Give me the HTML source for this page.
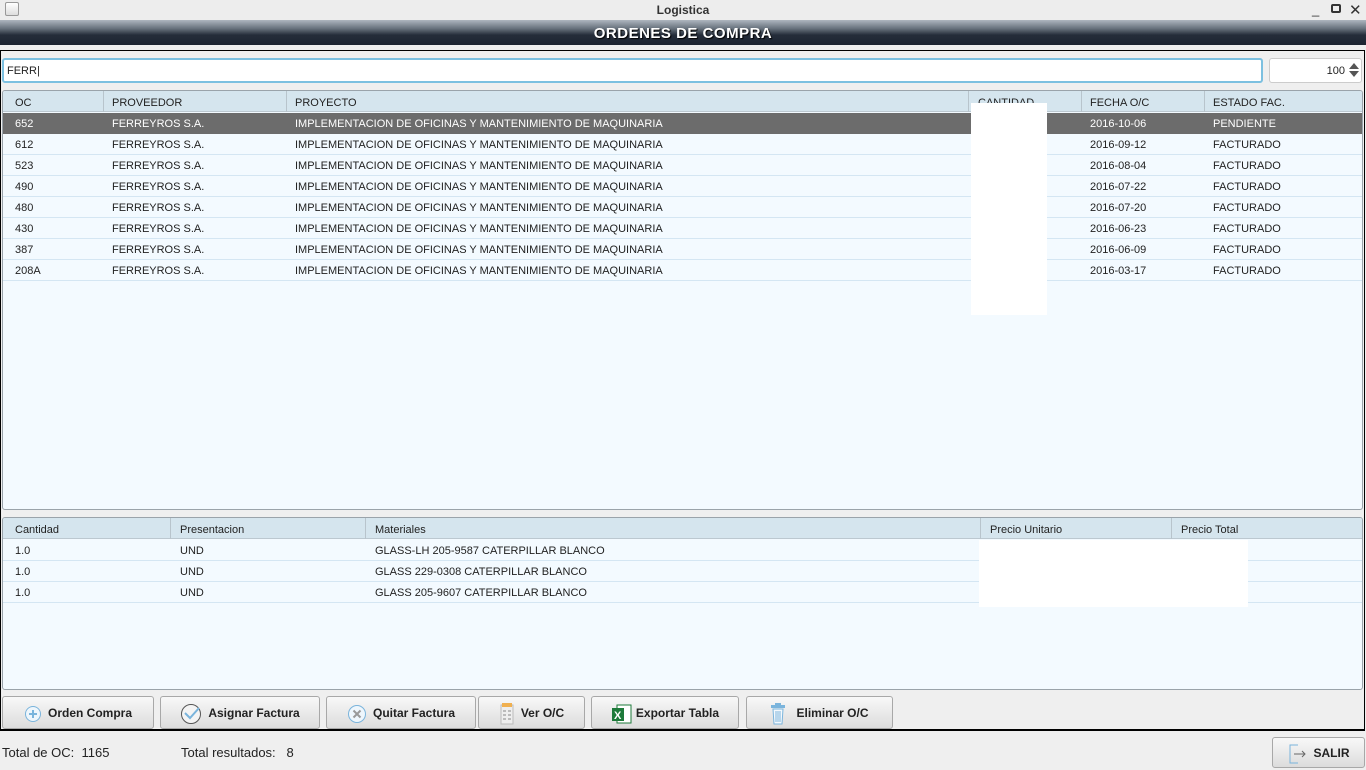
<!DOCTYPE html>
<html><head><meta charset="utf-8"><style>
*{margin:0;padding:0;box-sizing:border-box}
body{width:1366px;height:768px;background:#efefef;font-family:"Liberation Sans",sans-serif;position:relative;overflow:hidden;color:#222}
.a{position:absolute}
.title{left:0;top:0;width:1366px;height:20px;background:#ededed;text-align:center;font-size:12px;font-weight:bold;color:#333;line-height:21px}
.banner{left:0;top:20px;width:1366px;height:25px;background:linear-gradient(#aeb6bf 0%,#66707b 35%,#252d3a 60%,#1d2431 100%);text-align:center;color:#fff;font-weight:bold;font-size:15px;line-height:28px;letter-spacing:0.5px;text-shadow:1px 1px 1px #000}
.panel{left:0;top:50px;width:1365px;height:681px;border:1px solid #000;border-bottom:2px solid #000;background:#efefef}
.tbl{background:#f3faff;border:1px solid #9aa3aa;border-radius:3px;overflow:hidden}
.hd{position:absolute;left:0;right:0;top:0;height:21px;background:#d5e5ee;border-bottom:1px solid #bcc8d0}
.hd span{position:absolute;top:2px;font-size:11px;line-height:21px;white-space:nowrap}
.row span{position:absolute;top:1px;font-size:11px;line-height:21px;white-space:nowrap}
.hd i{position:absolute;top:0;width:1px;height:21px;background:#b8c4cc}
.row{position:absolute;left:0;right:0;height:21px;border-bottom:1px solid #d4e6f3}
.sel{background:#6c6c6c;color:#fff;border-bottom:none}
.btn{position:absolute;top:696px;height:33px;border:1px solid #a8a8a8;border-radius:3px;background:linear-gradient(#f8f8f8,#dcdcdc);font-weight:bold;font-size:12px;line-height:33px;padding-top:2px;color:#222;display:flex;align-items:center;justify-content:center;gap:6px}
.wb{background:#fff;position:absolute}
</style></head><body>
<div class="a title">Logistica</div>
<div class="a" style="left:5px;top:2px;width:14px;height:14px;border:1px solid #999;border-radius:2px;background:linear-gradient(#fff,#ddd)"></div>
<div class="a" style="left:1312px;top:2px;font-size:13px;color:#333">_</div>
<div class="a" style="left:1331px;top:4px;width:10px;height:9px;border:2px solid #333;border-radius:2px"></div>
<div class="a" style="left:1349px;top:1px;font-size:15px;color:#333">✕</div>
<div class="a banner">ORDENES DE COMPRA</div>
<div class="a panel"></div>
<div class="a" style="left:2px;top:58px;width:1261px;height:25px;border:2px solid #7cc0e0;border-radius:3px;background:#fff;font-size:11px;line-height:23px;padding-left:3px">FERR|</div>
<div class="a" style="left:1269px;top:58px;width:93px;height:25px;border:1px solid #ccc;border-radius:3px;background:#fff;font-size:11px;line-height:24px;text-align:right;padding-right:16px">100</div>
<div class="a" style="left:1349px;top:63px;width:0;height:0;border-left:5px solid transparent;border-right:5px solid transparent;border-bottom:6px solid #555"></div>
<div class="a" style="left:1349px;top:71px;width:0;height:0;border-left:5px solid transparent;border-right:5px solid transparent;border-top:6px solid #555"></div>

<div class="a tbl" style="left:2px;top:90px;width:1361px;height:420px">
 <div class="hd"><span style="left:12px">OC</span><i style="left:100px"></i><span style="left:109px">PROVEEDOR</span><i style="left:283px"></i><span style="left:292px">PROYECTO</span><i style="left:965px"></i><span style="left:975px">CANTIDAD</span><i style="left:1078px"></i><span style="left:1087px">FECHA O/C</span><i style="left:1201px"></i><span style="left:1210px">ESTADO FAC.</span></div>
 <div class="row sel" style="top:22px"><span style="left:12px">652</span><span style="left:109px">FERREYROS S.A.</span><span style="left:292px">IMPLEMENTACION DE OFICINAS Y MANTENIMIENTO DE MAQUINARIA</span><span style="left:1087px">2016-10-06</span><span style="left:1210px">PENDIENTE</span></div>
 <div class="row" style="top:43px"><span style="left:12px">612</span><span style="left:109px">FERREYROS S.A.</span><span style="left:292px">IMPLEMENTACION DE OFICINAS Y MANTENIMIENTO DE MAQUINARIA</span><span style="left:1087px">2016-09-12</span><span style="left:1210px">FACTURADO</span></div>
 <div class="row" style="top:64px"><span style="left:12px">523</span><span style="left:109px">FERREYROS S.A.</span><span style="left:292px">IMPLEMENTACION DE OFICINAS Y MANTENIMIENTO DE MAQUINARIA</span><span style="left:1087px">2016-08-04</span><span style="left:1210px">FACTURADO</span></div>
 <div class="row" style="top:85px"><span style="left:12px">490</span><span style="left:109px">FERREYROS S.A.</span><span style="left:292px">IMPLEMENTACION DE OFICINAS Y MANTENIMIENTO DE MAQUINARIA</span><span style="left:1087px">2016-07-22</span><span style="left:1210px">FACTURADO</span></div>
 <div class="row" style="top:106px"><span style="left:12px">480</span><span style="left:109px">FERREYROS S.A.</span><span style="left:292px">IMPLEMENTACION DE OFICINAS Y MANTENIMIENTO DE MAQUINARIA</span><span style="left:1087px">2016-07-20</span><span style="left:1210px">FACTURADO</span></div>
 <div class="row" style="top:127px"><span style="left:12px">430</span><span style="left:109px">FERREYROS S.A.</span><span style="left:292px">IMPLEMENTACION DE OFICINAS Y MANTENIMIENTO DE MAQUINARIA</span><span style="left:1087px">2016-06-23</span><span style="left:1210px">FACTURADO</span></div>
 <div class="row" style="top:148px"><span style="left:12px">387</span><span style="left:109px">FERREYROS S.A.</span><span style="left:292px">IMPLEMENTACION DE OFICINAS Y MANTENIMIENTO DE MAQUINARIA</span><span style="left:1087px">2016-06-09</span><span style="left:1210px">FACTURADO</span></div>
 <div class="row" style="top:169px"><span style="left:12px">208A</span><span style="left:109px">FERREYROS S.A.</span><span style="left:292px">IMPLEMENTACION DE OFICINAS Y MANTENIMIENTO DE MAQUINARIA</span><span style="left:1087px">2016-03-17</span><span style="left:1210px">FACTURADO</span></div>
 <div class="wb" style="left:968px;top:12px;width:76px;height:212px"></div>
</div>

<div class="a tbl" style="left:2px;top:517px;width:1361px;height:173px">
 <div class="hd"><span style="left:12px">Cantidad</span><i style="left:167px"></i><span style="left:177px">Presentacion</span><i style="left:362px"></i><span style="left:372px">Materiales</span><i style="left:977px"></i><span style="left:987px">Precio Unitario</span><i style="left:1168px"></i><span style="left:1178px">Precio Total</span></div>
 <div class="row" style="top:22px"><span style="left:12px">1.0</span><span style="left:177px">UND</span><span style="left:372px">GLASS-LH 205-9587 CATERPILLAR BLANCO</span></div>
 <div class="row" style="top:43px"><span style="left:12px">1.0</span><span style="left:177px">UND</span><span style="left:372px">GLASS 229-0308 CATERPILLAR BLANCO</span></div>
 <div class="row" style="top:64px"><span style="left:12px">1.0</span><span style="left:177px">UND</span><span style="left:372px">GLASS 205-9607 CATERPILLAR BLANCO</span></div>
 <div class="wb" style="left:976px;top:22px;width:269px;height:67px"></div>
</div>

<div class="btn" style="left:2px;width:152px"><svg width="18" height="18"><circle cx="9" cy="9" r="7.5" fill="#eef6fc" stroke="#7ab4dc"/><path d="M9 5v8M5 9h8" stroke="#7ab4dc" stroke-width="2"/></svg>Orden Compra</div>
<div class="btn" style="left:160px;width:160px"><svg width="22" height="22"><circle cx="11" cy="11" r="9.5" fill="#f4f4f4" stroke="#555"/><path d="M5 10l5 5 9-10" fill="none" stroke="#7ab4dc" stroke-width="2"/></svg>Asignar Factura</div>
<div class="btn" style="left:326px;width:150px"><svg width="20" height="20"><circle cx="10" cy="10" r="8.5" fill="#eef6fc" stroke="#7ab4dc"/><path d="M6.5 6.5l7 7M13.5 6.5l-7 7" stroke="#999" stroke-width="2"/></svg>Quitar Factura</div>
<div class="btn" style="left:478px;width:107px"><svg width="16" height="24"><rect x="2" y="3" width="12" height="19" fill="#eee" stroke="#bbb"/><rect x="3" y="1" width="10" height="4" fill="#f0b050"/><path d="M4 9h3M9 9h3M4 13h3M9 13h3M4 17h3M9 17h3" stroke="#888"/></svg>Ver O/C</div>
<div class="btn" style="left:591px;width:148px;gap:3px"><svg width="22" height="22"><rect x="6" y="2" width="14" height="18" fill="#fff" stroke="#1d7a3a"/><rect x="1" y="5" width="12" height="13" fill="#1d7a3a"/><text x="3" y="16" font-size="11" font-weight="bold" fill="#fff" font-family="Liberation Sans">X</text></svg>Exportar Tabla</div>
<div class="btn" style="left:746px;width:147px;gap:10px"><svg width="16" height="24"><rect x="5" y="1" width="6" height="2" fill="#7ab4dc"/><rect x="1" y="3" width="14" height="3" fill="#7ab4dc"/><path d="M3 7h10l-1 15H4z" fill="#f4f9fd" stroke="#7ab4dc"/><path d="M6 9v11M8 9v11M10 9v11" stroke="#7ab4dc"/></svg>Eliminar O/C</div>

<div class="a" style="left:2px;top:745px;font-size:13px;line-height:16px">Total de OC:&nbsp; 1165</div>
<div class="a" style="left:181px;top:745px;font-size:13px;line-height:16px">Total resultados:&nbsp;&nbsp; 8</div>
<div class="btn" style="left:1272px;top:737px;width:93px;height:31px;gap:6px"><svg width="20" height="22"><path d="M10 2H2v18h8" fill="none" stroke="#7ab4dc"/><path d="M6 11h11M14 8l3 3-3 3" fill="none" stroke="#666"/></svg>SALIR</div>
</body></html>
